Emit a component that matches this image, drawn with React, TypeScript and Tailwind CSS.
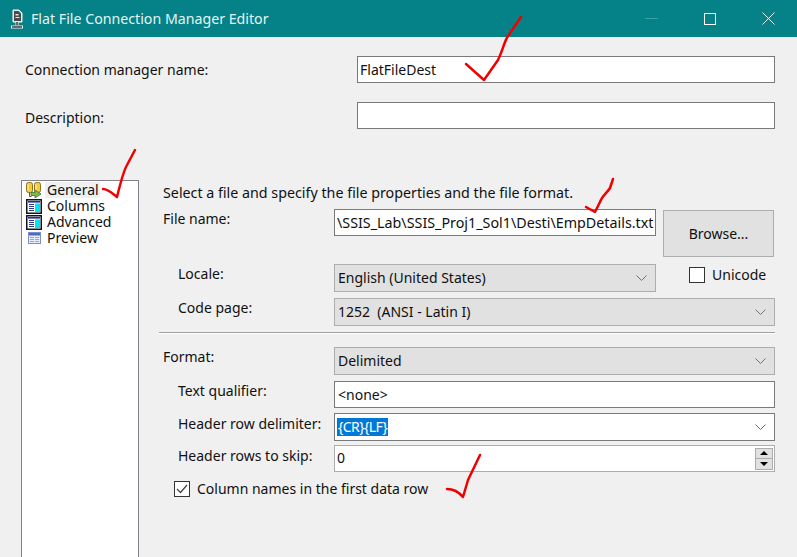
import { ReactNode } from "react";

const stroke = "fill-none stroke-[#f00000] stroke-[2.5]";

function Chevron() {
    return (
        <svg width="11" height="6" viewBox="0 0 11 6" className="shrink-0">
            <path d="M0.5 0.5 L5.5 5.5 L10.5 0.5" fill="none" stroke="#707070" strokeWidth="1" />
        </svg>
    );
}

function Select({ children, className = "" }: { children: ReactNode; className?: string }) {
    return (
        <div className={`h-[28px] border border-[#adadad] bg-[#e1e1e1] flex items-center justify-between pl-[3px] pr-[8px] ${className}`}>
            <span>{children}</span>
            <Chevron />
        </div>
    );
}

function Row({ label, indent, labelClass = "", children, className = "" }: { label: string; indent?: boolean; labelClass?: string; children: ReactNode; className?: string }) {
    return (
        <div className={`flex ${className}`}>
            <div className={`w-[175px] shrink-0 ${indent ? "pl-[19px]" : "pl-[4px]"} ${labelClass}`}>{label}</div>
            {children}
        </div>
    );
}

function ColumnsIcon() {
    return (
        <svg width="16" height="15" viewBox="0 0 16 15">
            <rect x="0.75" y="0.75" width="14.5" height="13.5" fill="#fff" stroke="#14141c" strokeWidth="1.5" />
            <rect x="2" y="2" width="12" height="1.6" fill="#2a2aa0" />
            <path d="M3 5.5h5M3 7.5h5M3 9.5h5M3 11.5h5" stroke="#2a3a90" strokeWidth="1" />
            <rect x="9" y="4.5" width="5" height="8.5" fill="#00e4f0" />
        </svg>
    );
}

function GeneralIcon() {
    return (
        <svg width="16" height="16" viewBox="0 0 16 16">
            <rect x="0.5" y="0.5" width="6" height="10" rx="2" fill="#f2cc3c" stroke="#8a7420" />
            <rect x="8.5" y="0.5" width="6" height="10" rx="2" fill="#f2cc3c" stroke="#8a7420" />
            <path d="M2 2.5v6M10 2.5v6" stroke="#fff2b0" strokeWidth="1" />
            <path d="M3.5 10.5v4h2" fill="none" stroke="#5a5a48" />
            <path d="M5 10.5h4V8l6 4-6 4v-2.5H5z" fill="#7fb84a" stroke="#40702a" strokeWidth="0.8" />
        </svg>
    );
}

function PreviewIcon() {
    return (
        <svg width="13" height="12" viewBox="0 0 13 12">
            <rect x="0.5" y="0.5" width="12" height="11" fill="#e8eef8" stroke="#7c8ec8" />
            <rect x="1" y="1" width="11" height="2.5" fill="#5068c8" />
            <path d="M2 5.5h4M7 5.5h4M2 7.5h4M7 7.5h4M2 9.5h4M7 9.5h4" stroke="#9aa8c8" strokeWidth="1.2" />
        </svg>
    );
}

function TitleIcon() {
    return (
        <svg width="14" height="20" viewBox="0 0 14 20">
            <path d="M3 1h6l3 3v9H3z" fill="#d8dcdc" stroke="#f4f4f4" />
            <path d="M4 2h4.5l2.5 2.5V12H4z" fill="#4a4a4a" />
            <path d="M5.5 5h3v1.5h-3zM5.5 8h4v1h-4z" fill="#e8e8e8" />
            <path d="M7 13v3" stroke="#f0f0f0" strokeWidth="3" />
            <path d="M7 13v3" stroke="#303030" strokeWidth="1.4" />
            <path d="M1 18h12" stroke="#f0f0f0" strokeWidth="3" />
            <path d="M2 18h10" stroke="#303030" strokeWidth="1.4" />
        </svg>
    );
}

export default function App() {
    return (
        <div className="relative w-[797px] h-[557px] overflow-hidden bg-[#f0f0f0] text-[14px] leading-[20px] text-[#101010] font-['Noto_Sans','Open_Sans',sans-serif]">
            <div className="h-[37px] bg-[#048287] flex items-center text-[#e4f4f4] text-[14.2px]">
                <div className="ml-[10px] w-[21px]"><TitleIcon /></div>
                <span>Flat File Connection Manager Editor</span>
                <div className="ml-auto flex items-center">
                    <div className="w-[13px] h-px bg-[#3aa0a4] mr-[46px]" />
                    <div className="w-[12px] h-[12px] border border-white mr-[46px]" />
                    <svg width="13" height="13" viewBox="0 0 13 13" className="mr-[22px]">
                        <path d="M0.5 0.5 L12.5 12.5 M12.5 0.5 L0.5 12.5" stroke="#e8f4f4" strokeWidth="1" />
                    </svg>
                </div>
            </div>

            <div className="flex items-center mt-[19px] pl-[25px]">
                <div className="w-[332px]">Connection manager name:</div>
                <div className="w-[418px] h-[27px] border border-[#7a7a7a] bg-white flex items-center pl-[2px]">FlatFileDest</div>
            </div>
            <div className="flex items-center mt-[19px] pl-[25px]">
                <div className="w-[332px] pt-[5px]">Description:</div>
                <div className="w-[418px] h-[27px] border border-[#7a7a7a] bg-white" />
            </div>

            <div className="flex mt-[51px] pl-[21px]">
                <div className="w-[118px] h-[378px] border border-[#82828c] bg-white pl-[4px] pt-px leading-[16px]">
                    <div className="flex items-center h-[16px] gap-[3px]">
                        <GeneralIcon />
                        <span className="bg-[#f0f0f0] px-[2px] w-[55px]">General</span>
                    </div>
                    <div className="flex items-center h-[16px] gap-[5px]"><ColumnsIcon /><span>Columns</span></div>
                    <div className="flex items-center h-[16px] gap-[5px]"><ColumnsIcon /><span>Advanced</span></div>
                    <div className="flex items-center h-[16px] gap-[5px] pl-[2px]"><PreviewIcon /><span className="ml-[1px]">Preview</span></div>
                </div>

                <div className="ml-[20px] w-[616px]">
                    <div className="pl-[4px] pt-[3px] h-[29px] text-[14.28px]">Select a file and specify the file properties and the file format.</div>
                    <Row label="File name:" className="h-[48px]">
                        <div className="w-[322px] h-[27px] border border-[#7a7a7a] bg-white flex items-center pl-[2px] overflow-hidden whitespace-nowrap text-[14.3px]">\SSIS_Lab\SSIS_Proj1_Sol1\Desti\EmpDetails.txt</div>
                        <div className="ml-[7px] mt-[1px] w-[111px] h-[47px] border border-[#adadad] bg-[#e1e1e1] flex items-center justify-center">Browse...</div>
                    </Row>
                    <Row label="Locale:" indent className="mt-[7px]">
                        <Select className="w-[322px]">English (United States)</Select>
                        <div className="ml-[33px] mt-[3px] flex items-start gap-[7px]">
                            <div className="w-[16px] h-[16px] border border-[#333] bg-white" />
                            <span className="-mt-[2px]">Unicode</span>
                        </div>
                    </Row>
                    <Row label="Code page:" indent className="mt-[6px]">
                        <Select className="w-[441px]">1252&nbsp; (ANSI - Latin I)</Select>
                    </Row>
                    <div className="mt-[6px] h-[2px] border-t border-[#a0a0a0] bg-white" />
                    <Row label="Format:" className="mt-[13px]">
                        <Select className="w-[441px]">Delimited</Select>
                    </Row>
                    <Row label="Text qualifier:" indent className="mt-[6px]">
                        <div className="w-[441px] h-[27px] border border-[#7a7a7a] bg-white flex items-center pl-[3px]">&lt;none&gt;</div>
                    </Row>
                    <Row label="Header row delimiter:" indent labelClass="pt-px" className="mt-[5px]">
                        <div className="w-[441px] h-[28px] border border-[#7a7a7a] bg-white flex items-center justify-between pl-[2px] pr-[8px]">
                            <span className="bg-[#0078d7] text-white h-[18px] leading-[18px] px-px tracking-[-0.55px] -mt-[1px]">{"{CR}{LF}"}</span>
                            <Chevron />
                        </div>
                    </Row>
                    <Row label="Header rows to skip:" indent labelClass="pt-px" className="mt-[4px]">
                        <div className="w-[441px] h-[27px] border border-[#adadad] bg-white flex items-center justify-between pl-[2px] pr-[1px]">
                            <span className="-mt-[2px]">0</span>
                            <div className="flex flex-col w-[18px]">
                                <div className="h-[11px] border border-[#adadad] bg-[#e1e1e1] flex items-center justify-center">
                                    <svg width="8" height="4" viewBox="0 0 8 4"><path d="M4 0 L8 4 H0z" fill="#000" /></svg>
                                </div>
                                <div className="h-[11px] border border-[#adadad] border-t-0 bg-[#e1e1e1] flex items-center justify-center">
                                    <svg width="8" height="4" viewBox="0 0 8 4"><path d="M0 0 H8 L4 4z" fill="#000" /></svg>
                                </div>
                            </div>
                        </div>
                    </Row>
                    <div className="flex items-center mt-[7px] ml-[15px] gap-[7px]">
                        <div className="w-[16px] h-[16px] border border-[#333] bg-white flex items-center justify-center">
                            <svg width="12" height="10" viewBox="0 0 12 10"><path d="M1 5 L4.5 8.5 L11 1" fill="none" stroke="#404040" strokeWidth="1.2" /></svg>
                        </div>
                        <span>Column names in the first data row</span>
                    </div>
                </div>
            </div>

            {/* red pen marks drawn over the dialog */}
            <svg width="797" height="557" viewBox="0 0 797 557" className="absolute inset-0 pointer-events-none">
                <path className={stroke} strokeLinecap="round" strokeLinejoin="round" d="M466 64 L484 80 L498 60 C503 50 504 42 508 36 L521 17" />
                <path className={stroke} strokeLinecap="round" strokeLinejoin="round" d="M103 189 C108 189 112 193 117 197 C120 185 123 172 127 165 L135 150" />
                <path className={stroke} strokeLinecap="round" strokeLinejoin="round" d="M586 207 L595 212 L600 202 C602 196 607 193 610 188 L613 179" />
                <path className={stroke} strokeLinecap="round" strokeLinejoin="round" d="M447 489 C452 489 458 491 463 497 L468 480 L480 455" />
            </svg>
        </div>
    );
}
